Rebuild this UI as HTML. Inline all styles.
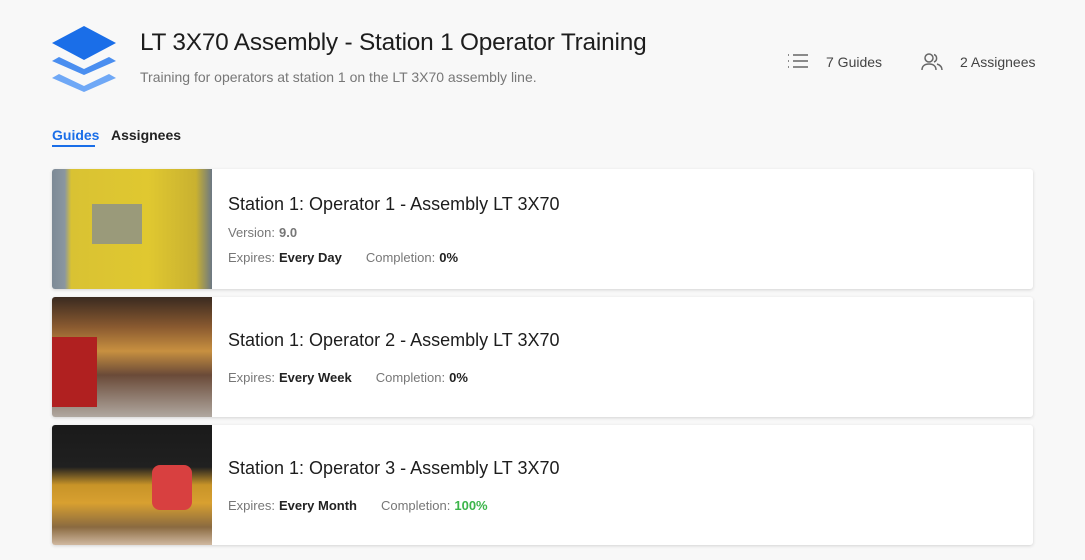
<!DOCTYPE html>
<html><head><style>
body{margin:0;width:1085px;height:560px;background:#f8f8f8;font-family:"Liberation Sans",sans-serif;position:relative;overflow:hidden;color:#222}
.abs{position:absolute}
h1{position:absolute;left:140px;top:29px;margin:0;font-size:24.4px;font-weight:normal;color:#1d1d1d;letter-spacing:-0.2px}
.sub{left:140px;top:69px;font-size:14px;color:#777}
.stat{font-size:14px;color:#444;top:54px}
.tab{top:127px;font-size:14px;font-weight:bold}
.card{position:absolute;left:52px;width:981px;height:120px;background:#fff;box-shadow:0 1px 3px rgba(0,0,0,.15);border-radius:3px;overflow:hidden}
.img{position:absolute;left:0;top:0;width:160px;height:120px}
.t{position:absolute;left:176px;font-size:18px;color:#1d1d1d}
.m{position:absolute;left:176px;font-size:13px;color:#777}
.m b{color:#222;font-weight:bold;margin-left:4px}
</style></head><body>
<svg class="abs" style="left:52px;top:25px" width="64" height="68" viewBox="0 0 64 68">
<path d="M0 53 L7 49 L32 61 L57 49 L64 53 L32 67 Z" fill="#6fa8f6"/>
<path d="M0 36 L7 32 L32 44 L57 32 L64 36 L32 50 Z" fill="#4a8ef0"/>
<path d="M0 18 L32 1 L64 18 L32 35 Z" fill="#1a6ee8"/>
</svg>
<h1>LT 3X70 Assembly - Station 1 Operator Training</h1>
<div class="abs sub">Training for operators at station 1 on the LT 3X70 assembly line.</div>
<svg class="abs" style="left:787px;top:53px" width="22" height="16" viewBox="0 0 22 16" stroke="#666" stroke-width="1.6"><path d="M1 2h1M1 8h1M1 14h1M6 2h15M6 8h15M6 14h15"/></svg>
<div class="abs stat" style="left:826px">7 Guides</div>
<svg class="abs" style="left:921px;top:52px" width="22" height="20" viewBox="0 0 22 20" fill="none" stroke="#666" stroke-width="1.5"><circle cx="8" cy="6" r="4"/><path d="M1 18c0-4 3-6 7-6s7 2 7 6"/><path d="M13 2.5a4 4 0 0 1 0 7.5M16 12c3 1 5 3 5 6"/></svg>
<div class="abs stat" style="left:960px">2 Assignees</div>
<div class="abs tab" style="left:52px;color:#1a6ee8">Guides</div>
<div class="abs" style="left:52px;top:145px;width:43px;height:2px;background:#1a6ee8"></div>
<div class="abs tab" style="left:111px;color:#222">Assignees</div>

<div class="card" style="top:169px">
<div class="img" style="background:linear-gradient(90deg,#7d8a96 0,#8a96a0 8%,#d9c233 12%,#e0c830 60%,#c9b130 90%,#6c7884 100%)"><div style="position:absolute;left:40px;top:35px;width:50px;height:40px;background:#9a9a7a"></div></div>
<div class="t" style="top:25px">Station 1: Operator 1 - Assembly LT 3X70</div>
<div class="m" style="top:56px">Version:<b style="color:#777">9.0</b></div>
<div class="m" style="top:81px">Expires:<b>Every Day</b><span style="margin-left:24px">Completion:<b>0%</b></span></div>
</div>
<div class="card" style="top:297px">
<div class="img" style="background:linear-gradient(180deg,#3a2a20 0,#8a5a30 25%,#c89040 45%,#6a4a38 65%,#b0a8a0 100%)"><div style="position:absolute;left:0;top:40px;width:45px;height:70px;background:#b02020"></div></div>
<div class="t" style="top:33px">Station 1: Operator 2 - Assembly LT 3X70</div>
<div class="m" style="top:73px">Expires:<b>Every Week</b><span style="margin-left:24px">Completion:<b>0%</b></span></div>
</div>
<div class="card" style="top:425px">
<div class="img" style="background:linear-gradient(180deg,#1a1a1a 0,#202020 35%,#c89428 50%,#d8a030 65%,#8a6a40 85%,#d0b8a0 100%)"><div style="position:absolute;left:100px;top:40px;width:40px;height:45px;background:#d84040;border-radius:8px"></div></div>
<div class="t" style="top:33px">Station 1: Operator 3 - Assembly LT 3X70</div>
<div class="m" style="top:73px">Expires:<b>Every Month</b><span style="margin-left:24px">Completion:<b style="color:#3cb54a">100%</b></span></div>
</div>
</body></html>
